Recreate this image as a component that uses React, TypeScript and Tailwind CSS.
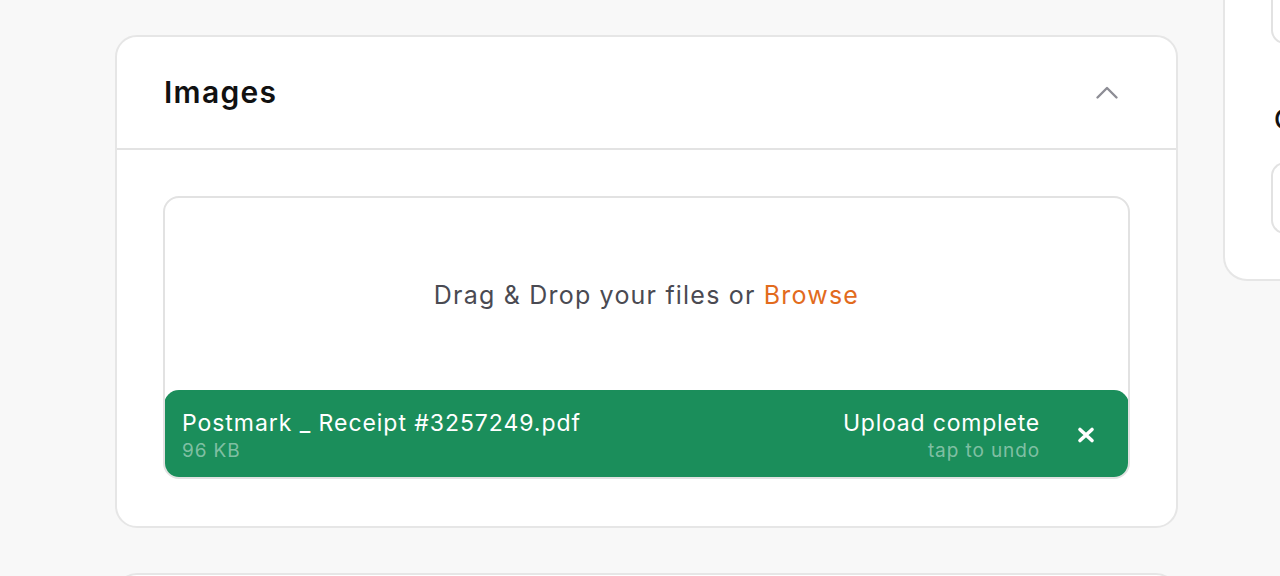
import { useState } from 'react';

function ChevronUp() {
  return (
    <svg width="24" height="15" viewBox="0 0 24 15" fill="none" className="text-[#8d8d95]">
      <path d="M2.5 12.5 L12 3 L21.5 12.5" stroke="currentColor" strokeWidth="2.4" strokeLinecap="round" strokeLinejoin="round" />
    </svg>
  );
}

function CloseIcon() {
  return (
    <svg width="20" height="20" viewBox="0 0 20 20" fill="none">
      <path d="M4 4.5 L16 15.5 M16 4.5 L4 15.5" stroke="white" strokeWidth="3.6" strokeLinecap="round" />
    </svg>
  );
}

export default function App() {
  const [open, setOpen] = useState(true);
  const [uploaded, setUploaded] = useState(true);

  return (
    <div className="h-[576px] w-full overflow-hidden bg-[#f8f8f8] flex items-start font-['Inter','Noto_Sans',sans-serif] antialiased">
      {/* Main column */}
      <div className="pl-[115px] pt-[35px] flex flex-col gap-[45px] shrink-0">
        <section className="w-[1063px] bg-white rounded-[22px] border-2 border-[#e6e6e6]">
          <header className="h-[113px] flex items-center justify-between pl-[47px] pr-[57px] border-b-2 border-[#e3e3e3]">
            <h2 className="text-[30px] font-semibold text-[#111] tracking-[1.3px]">Images</h2>
            <button onClick={() => setOpen(!open)} className="flex items-center justify-center">
              <ChevronUp />
            </button>
          </header>

          {open && (
            <div className="px-[46px] pt-[46px] pb-[47px]">
              {/* Drop zone */}
              <div className="h-[283px] rounded-[16px] border-2 border-[#e2e2e2] flex flex-col overflow-hidden">
                <div className="flex-1 flex items-center justify-center pt-[3px]">
                  <p className="text-[25px] text-[#4a4a52] tracking-[1.2px]">
                    Drag &amp; Drop your files or <span className="text-[#e26b1d] cursor-pointer">Browse</span>
                  </p>
                </div>
                {uploaded && (
                  <div className="h-[88px] -mx-[1px] -mb-[1px] bg-[#1b8e5b] rounded-[15px] flex items-center pl-[18px] pr-[33px] pt-[4px] text-white">
                    <div className="flex-1 flex flex-col leading-none">
                      <span className="text-[23px] tracking-[0.95px]">Postmark _ Receipt #3257249.pdf</span>
                      <span className="text-[19px] text-white/45 tracking-[0.9px] mt-[6px]">96 KB</span>
                    </div>
                    <div className="flex flex-col items-end leading-none">
                      <span className="text-[23px] tracking-[0.8px]">Upload complete</span>
                      <span className="text-[19px] text-white/45 tracking-[0.9px] mt-[6px]">tap to undo</span>
                    </div>
                    <button onClick={() => setUploaded(false)} className="ml-[36px] -mt-[3px] flex items-center justify-center">
                      <CloseIcon />
                    </button>
                  </div>
                )}
              </div>
            </div>
          )}
        </section>

        <section className="w-[1063px] h-[200px] bg-white rounded-[22px] border-2 border-[#e6e6e6]" />
      </div>

      {/* Side panel */}
      <aside className="ml-[45px] -mt-[40px] w-[200px] shrink-0 bg-white rounded-bl-[24px] border-2 border-r-0 border-[#e6e6e6] pl-[46px] pb-[45px]">
        <div className="h-[82px] rounded-b-[14px] border-2 border-t-0 border-[#e2e2e2]" />
        <p className="mt-[56px] pl-[3px] text-[27px] font-medium text-[#111]">Collection</p>
        <div className="mt-[21px] h-[72px] rounded-l-[14px] border-2 border-r-0 border-[#e2e2e2]" />
      </aside>
    </div>
  );
}
